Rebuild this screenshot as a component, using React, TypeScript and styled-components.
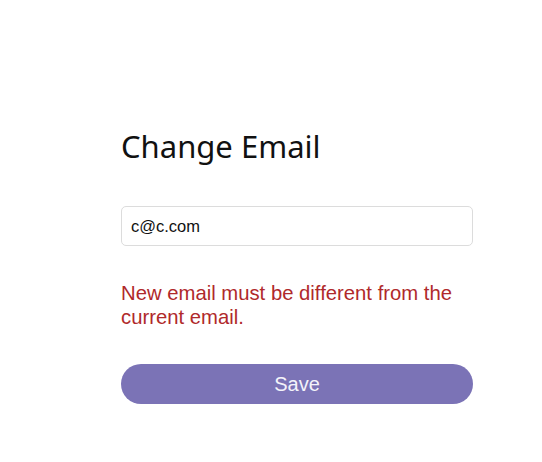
import React from "react";
import styled, { createGlobalStyle } from "styled-components";

const Global = createGlobalStyle`
  html, body { margin: 0; padding: 0; background: #ffffff; }
  * { box-sizing: border-box; }
`;

const Page = styled.div`
  padding: 124px 69px 0 121px;
  width: 542px;
`;

const Form = styled.div`
  display: flex;
  flex-direction: column;
  width: 352px;
`;

const Title = styled.h1`
  margin: 0;
  font-family: "Noto Sans", "Open Sans", sans-serif;
  font-weight: 400;
  font-size: 31px;
  line-height: 44px;
  color: #111111;
`;

const Input = styled.input`
  margin-top: 38px;
  height: 40px;
  width: 100%;
  border: 1px solid #dcdcdc;
  border-radius: 5px;
  padding: 0 9px;
  font-family: "Liberation Sans", Arial, sans-serif;
  font-size: 16.5px;
  color: #111111;
  outline: none;
`;

const ErrorText = styled.p`
  margin: 35px 0 0;
  font-family: "Liberation Sans", Arial, sans-serif;
  font-size: 20.3px;
  line-height: 24px;
  color: #b0292b;
`;

const SaveButton = styled.button`
  margin-top: 35px;
  height: 40px;
  width: 100%;
  border: none;
  border-radius: 20px;
  background: #7b73b6;
  color: #f4f3fa;
  font-family: "Liberation Sans", Arial, sans-serif;
  font-size: 20px;
  cursor: pointer;
`;

export default function App() {
  return (
    <>
      <Global />
      <Page>
        <Form>
          <Title>Change Email</Title>
          <Input defaultValue="c@c.com" />
          <ErrorText>New email must be different from the current email.</ErrorText>
          <SaveButton>Save</SaveButton>
        </Form>
      </Page>
    </>
  );
}
